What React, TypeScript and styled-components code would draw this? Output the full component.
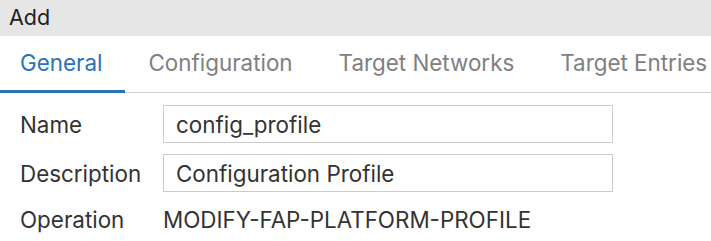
import styled, { createGlobalStyle } from 'styled-components';

const GlobalStyle = createGlobalStyle`
    html, body {
        margin: 0;
        padding: 0;
        background: #ffffff;
    }
    body {
        font-family: Inter, "Noto Sans", sans-serif;
        color: #333333;
    }
`;

const Dialog = styled.div`
    width: 711px;
    height: 241px;
    overflow: hidden;
    background: #ffffff;
`;

const TitleBar = styled.div`
    height: 36px;
    box-sizing: border-box;
    display: flex;
    align-items: center;
    padding: 0 0 3px 9px;
    background: #e6e6e6;
    color: #222222;
    font-size: 21.5px;
`;

const TabBar = styled.nav`
    display: flex;
    height: 57px;
    border-bottom: 1px solid #d0d0d0;
    box-sizing: border-box;
`;

const Tab = styled.button<{ active?: boolean }>`
    display: flex;
    align-items: center;
    padding: 0 23px 1px;
    margin-bottom: -1px;
    border: none;
    border-bottom: 3px solid ${(props) => (props.active ? '#2b73b9' : 'transparent')};
    background: none;
    font-family: inherit;
    font-size: 22.4px;
    color: ${(props) => (props.active ? '#2b73b9' : '#808080')};
    white-space: nowrap;
    cursor: pointer;

    &:first-child {
        padding-left: 20px;
    }
`;

const Form = styled.div`
    display: flex;
    flex-direction: column;
    gap: 11px;
    padding: 12px 0 0 20px;
`;

const Row = styled.div<{ height: number }>`
    display: grid;
    grid-template-columns: 143px 450px;
    align-items: center;
    height: ${(props) => props.height}px;
`;

const Label = styled.label`
    font-size: 22.4px;
    color: #333333;
`;

const TextInput = styled.input`
    box-sizing: border-box;
    width: 450px;
    height: 38px;
    padding: 0 12px;
    border: 1px solid #cccccc;
    border-radius: 0;
    font-family: inherit;
    font-size: 22.4px;
    color: #333333;
    outline: none;
`;

const Value = styled.span`
    font-size: 22.4px;
    color: #333333;
    white-space: nowrap;
`;

const tabs = ['General', 'Configuration', 'Target Networks', 'Target Entries'];

const App = () => {
    return (
        <>
            <GlobalStyle />
            <Dialog>
                <TitleBar>Add</TitleBar>
                <TabBar>
                    {tabs.map((tab, index) => (
                        <Tab key={tab} active={index === 0}>
                            {tab}
                        </Tab>
                    ))}
                </TabBar>
                <Form>
                    <Row height={38}>
                        <Label>Name</Label>
                        <TextInput defaultValue="config_profile" />
                    </Row>
                    <Row height={38}>
                        <Label>Description</Label>
                        <TextInput defaultValue="Configuration Profile" />
                    </Row>
                    <Row height={32}>
                        <Label>Operation</Label>
                        <Value>MODIFY-FAP-PLATFORM-PROFILE</Value>
                    </Row>
                </Form>
            </Dialog>
        </>
    );
};

export default App;
